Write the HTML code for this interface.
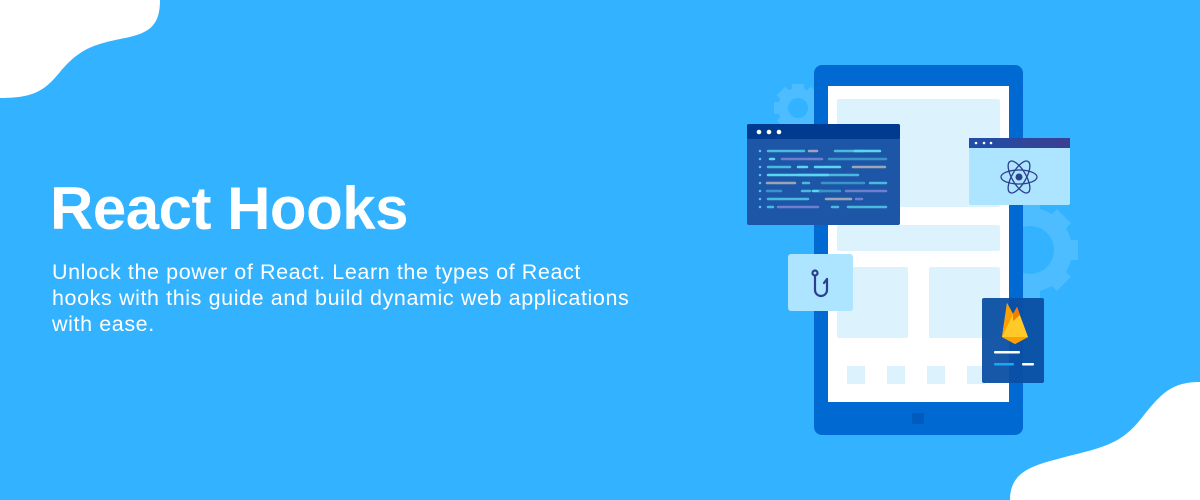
<!DOCTYPE html>
<html><head><meta charset="utf-8"><style>
html,body{margin:0;padding:0}
body{width:1200px;height:500px;overflow:hidden;background:#33b3ff;position:relative;font-family:"Liberation Sans",sans-serif}
svg{position:absolute;left:0;top:0}
h1{position:absolute;left:50px;top:174px;margin:0;color:#fff;font-size:60px;font-weight:bold;letter-spacing:-0.5px;line-height:70px}
p{position:absolute;left:52px;top:259px;margin:0;color:#fff;font-size:21.5px;line-height:26px;width:700px;letter-spacing:0.6px;white-space:nowrap}
</style></head><body>
<svg width="1200" height="500" viewBox="0 0 1200 500">
<path d="M0 0H160C160 25 150 33 125 38C95 44 80 48 60 72C45 90 35 98 0 98Z" fill="#fff"/>
<path d="M1200 382C1170 382 1160 395 1140 420C1120 445 1100 448 1065 457C1035 465 1010 470 1010 500H1200Z" fill="#fff"/>
<g fill="#4dbdff">
<circle cx="798" cy="108" r="20"/>
<rect x="792" y="84" width="12" height="48"/><rect x="774" y="102" width="48" height="12"/>
<rect x="792" y="84" width="12" height="48" transform="rotate(45 798 108)"/><rect x="792" y="84" width="12" height="48" transform="rotate(-45 798 108)"/>
<circle cx="1030" cy="250" r="42"/>
<rect x="1020" y="202" width="20" height="96"/><rect x="982" y="240" width="96" height="20"/>
<rect x="1020" y="202" width="20" height="96" transform="rotate(45 1030 250)"/><rect x="1020" y="202" width="20" height="96" transform="rotate(-45 1030 250)"/>
</g>
<circle cx="798" cy="108" r="10" fill="#33b3ff"/>
<circle cx="1030" cy="250" r="24" fill="#33b3ff"/>
<rect x="814" y="65" width="209" height="370" rx="8" fill="#006ad2"/>
<rect x="828" y="86" width="181" height="316" fill="#fff"/>
<g fill="#dcf2fd">
<rect x="837" y="99" width="163" height="108" rx="2"/>
<rect x="837" y="225" width="163" height="26" rx="2"/>
<rect x="837" y="267" width="71" height="71" rx="2"/>
<rect x="929" y="267" width="71" height="71" rx="2"/>
<rect x="847" y="366" width="18" height="18"/><rect x="887" y="366" width="18" height="18"/>
<rect x="927" y="366" width="18" height="18"/><rect x="967" y="366" width="18" height="18"/>
</g>
<rect x="912" y="413" width="12" height="11" fill="#005bc0"/>
<rect x="747" y="124" width="153" height="101" rx="2" fill="#1d56a7"/>
<rect x="747" y="124" width="153" height="15" rx="2" fill="#003b90"/>
<g fill="#fff"><circle cx="759" cy="132" r="2.3"/><circle cx="769" cy="132" r="2.3"/><circle cx="779" cy="132" r="2.3"/></g>
<g stroke-width="2.5" stroke-linecap="round">
<g stroke="#4fc6ea"><path d="M760 151h0M760 159h0M760 167h0M760 175h0M760 183h0M760 191h0M760 199h0M760 207h0"/></g>
<path d="M768 151h36M835 151h28M768 167h22M798 175h60M803 183h6M870 183h16M802 191h8M768 199h40M768 207h5M832 207h6M848 207h38" stroke="#49b9e0"/>
<path d="M855 151h25M770 159h4M798 167h9M815 167h25M768 175h60M813 191h9" stroke="#5ad6f0"/>
<path d="M809 151h8M853 167h32M767 183h28M826 199h25" stroke="#9aa6b8"/>
<path d="M782 159h40M846 191h40M778 207h40M856 199h6" stroke="#6f7fd0"/>
<path d="M829 159h57M822 183h42M820 191h20M767 191h14" stroke="#3a93c9"/>
</g>
<defs><linearGradient id="g1" x1="0" x2="1"><stop offset="0" stop-color="#1f4ea8"/><stop offset="1" stop-color="#3b3f91"/></linearGradient></defs>
<rect x="969" y="138" width="101" height="67" rx="2" fill="#ade4ff"/>
<rect x="969" y="138" width="101" height="10" fill="url(#g1)"/>
<g fill="#fff"><circle cx="976" cy="143" r="1.3"/><circle cx="984" cy="143" r="1.3"/><circle cx="991" cy="143" r="1.3"/></g>
<g fill="none" stroke="#2b3f8e" stroke-width="1.3">
<ellipse cx="1019" cy="177" rx="18" ry="7"/>
<ellipse cx="1019" cy="177" rx="18" ry="7" transform="rotate(60 1019 177)"/>
<ellipse cx="1019" cy="177" rx="18" ry="7" transform="rotate(-60 1019 177)"/>
</g>
<circle cx="1019" cy="177" r="3.5" fill="#2b3f8e"/>
<rect x="788" y="254" width="65" height="57" rx="3" fill="#ade4ff"/>
<g fill="none" stroke="#2c3f8e" stroke-width="2.2" stroke-linecap="round">
<circle cx="815" cy="273" r="2.5"/>
<path d="M815 276V290a6 6 0 0 0 12 0V279"/>
<path d="M827 279l-3 4"/>
</g>
<rect x="982" y="298" width="62" height="85" rx="2" fill="#0b4fa3" opacity="0.95"/>
<path d="M1002 337l5-34 6 11 4-7 11 30-13 7z" fill="#ffca28"/>
<path d="M1002 337l5-34 6 11z" fill="#ffa000"/>
<path d="M1013 314l4-7 3 8-7 6z" fill="#f57c00"/>
<path d="M1002 337l26 0-13 7z" fill="#ffa000"/>
<rect x="994" y="351" width="26" height="2.5" rx="1" fill="#fff"/>
<rect x="994" y="363" width="20" height="2.5" rx="1" fill="#1aa7f5"/>
<rect x="1022" y="363" width="12" height="2.5" rx="1" fill="#fff"/>
</svg>
<h1>React Hooks</h1>
<p>Unlock the power of React. Learn the types of React<br>hooks with this guide and build dynamic web applications<br>with ease.</p>
</body></html>
